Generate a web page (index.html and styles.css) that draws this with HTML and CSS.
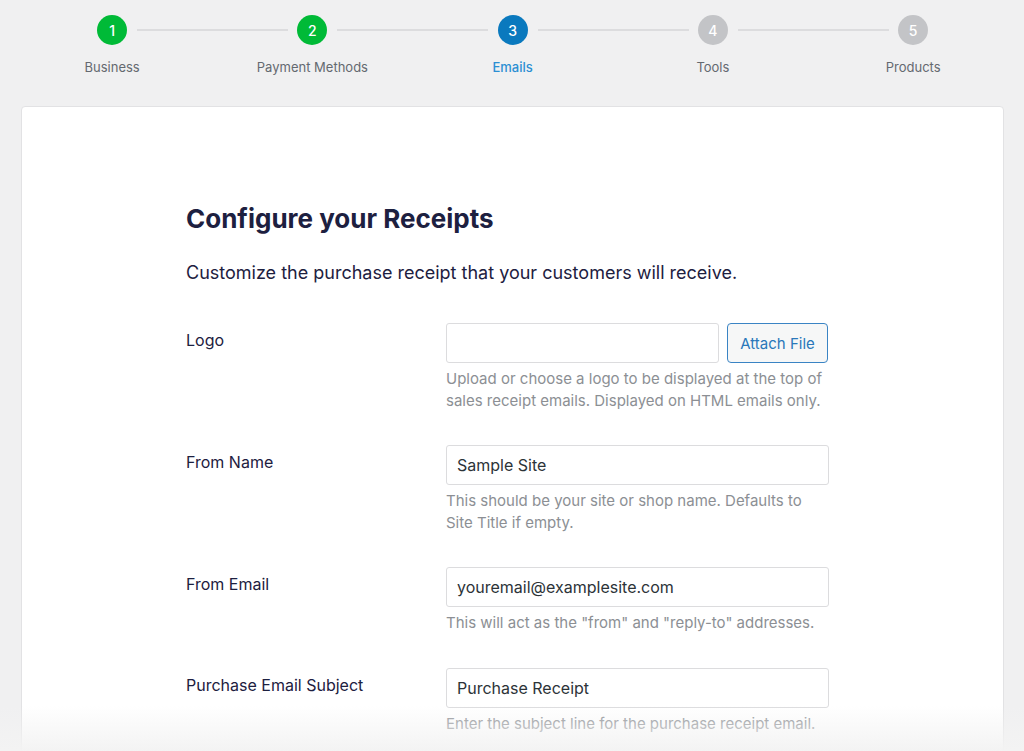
FILE: index.html
```html
<!DOCTYPE html>
<html lang="en">
<head>
<meta charset="utf-8">
<title>Configure your Receipts</title>
<link rel="stylesheet" href="styles.css">
</head>
<body>
<div class="page">
  <ol class="steps">
    <li class="step done"><span class="dot">1</span><span class="label">Business</span></li>
    <li class="step done"><span class="dot">2</span><span class="label">Payment Methods</span></li>
    <li class="step current"><span class="dot">3</span><span class="label">Emails</span></li>
    <li class="step"><span class="dot">4</span><span class="label">Tools</span></li>
    <li class="step last"><span class="dot">5</span><span class="label">Products</span></li>
  </ol>

  <main class="card">
    <h1 class="title">Configure your Receipts</h1>
    <p class="intro">Customize the purchase receipt that your customers will receive.</p>

    <div class="row">
      <label class="field-label">Logo</label>
      <div class="field">
        <div class="file-line">
          <input class="input input-short" type="text" value="">
          <button class="btn" type="button">Attach File</button>
        </div>
        <p class="help">Upload or choose a logo to be displayed at the top of sales receipt emails. Displayed on HTML emails only.</p>
      </div>
    </div>

    <div class="row">
      <label class="field-label">From Name</label>
      <div class="field">
        <input class="input" type="text" value="Sample Site">
        <p class="help">This should be your site or shop name. Defaults to Site Title if empty.</p>
      </div>
    </div>

    <div class="row">
      <label class="field-label">From Email</label>
      <div class="field">
        <input class="input" type="text" value="youremail@examplesite.com">
        <p class="help">This will act as the "from" and "reply-to" addresses.</p>
      </div>
    </div>

    <div class="row">
      <label class="field-label">Purchase Email Subject</label>
      <div class="field">
        <input class="input" type="text" value="Purchase Receipt">
        <p class="help">Enter the subject line for the purchase receipt email.</p>
      </div>
    </div>
  </main>
  <div class="fade"></div>
</div>
</body>
</html>
```

FILE: styles.css
```css
* { box-sizing: border-box; }
html, body {
  margin: 0;
  padding: 0;
  height: 100%;
  overflow: hidden;
  background: #f0f0f1;
  font-family: Inter, "Noto Sans", "Liberation Sans", sans-serif;
}
.page {
  position: relative;
  height: 751px;
  overflow: hidden;
}
.steps {
  list-style: none;
  margin: 0;
  padding: 15px 0 0 12px;
  display: grid;
  grid-template-columns: repeat(5, 200.25px);
}
.step {
  position: relative;
  display: flex;
  flex-direction: column;
  align-items: center;
}
.step::after {
  content: "";
  position: absolute;
  top: 14px;
  left: calc(50% + 25px);
  width: 151px;
  height: 2px;
  background: #dcdcde;
}
.step.last::after { display: none; }
.dot {
  width: 30px;
  height: 30px;
  border-radius: 50%;
  background: #c3c4c7;
  color: #fff;
  font-size: 14px;
  font-weight: 500;
  display: flex;
  align-items: center;
  justify-content: center;
}
.done .dot { background: #00ba37; }
.current .dot { background: #0a79be; }
.label {
  margin-top: 14px;
  font-size: 13px;
  line-height: 16px;
  color: #646970;
}
.current .label { color: #2c8fd3; font-weight: 500; }

.card {
  margin: 31px 0 0 21px;
  width: 983px;
  min-height: 700px;
  background: #fff;
  border: 1px solid #e2e2e4;
  border-radius: 4px;
  padding: 96px 0 0 164px;
}
.title {
  margin: 0;
  font-size: 26px;
  line-height: 32px;
  font-weight: 700;
  color: #1d2040;
}
.intro {
  margin: 25px 0 0;
  font-size: 18px;
  line-height: 26px;
  color: #1d2040;
}
.row {
  display: flex;
  margin-top: 34px;
}
.intro + .row { margin-top: 37px; }
.field-label {
  width: 260px;
  flex: none;
  padding-top: 6px;
  font-size: 16px;
  line-height: 22px;
  color: #1d2040;
}
.field { width: 384px; }
.file-line {
  display: flex;
  gap: 8px;
}
.input {
  display: block;
  width: 383px;
  height: 40px;
  margin: 0;
  border: 1px solid #dcdcde;
  border-radius: 3px;
  padding: 0 10px;
  font-family: inherit;
  font-size: 16px;
  color: #2c3338;
  background: #fff;
}
.input-short { width: 273px; }
.btn {
  width: 101px;
  height: 40px;
  border: 1px solid #3a84c4;
  border-radius: 4px;
  background: #f6f7f7;
  color: #2a78ba;
  font-family: inherit;
  font-size: 15px;
  padding: 0;
}
.help {
  margin: 5px 0 0;
  font-size: 15px;
  line-height: 21.5px;
  color: #8c8f94;
}
.fade {
  position: absolute;
  left: 0;
  right: 0;
  bottom: 0;
  height: 45px;
  background: linear-gradient(to bottom, rgba(243,243,243,0), rgba(243,243,243,1));
}
```
